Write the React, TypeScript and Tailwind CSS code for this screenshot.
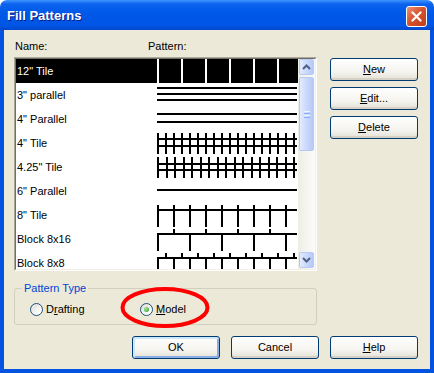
import React from 'react';

type Seg = [number, number, number, number];

const range = (start: number, step: number, max: number) => {
    const out: number[] = [];
    for (let v = start; v <= max; v += step) out.push(Math.round(v));
    return out;
};

const hLine = (y: number): Seg => [0, y, 140, y];

// line segments of each pattern, inside a 140x24 cell
const patterns: Record<string, Seg[]> = {
    tile12: range(1, 24, 139).map((x) => [x, 0, x, 24] as Seg),
    par3: [hLine(5), hLine(11), hLine(17)],
    par4: [hLine(7), hLine(15)],
    tile4: [hLine(8), hLine(15), ...range(1, 8, 139).map((x) => [x, 2, x, 23] as Seg)],
    tile425: [hLine(9), hLine(15), ...range(1, 8.5, 139).map((x) => [x, 2, x, 23] as Seg)],
    par6: [hLine(11)],
    tile8: [hLine(7), ...range(1, 16, 139).map((x) => [x, 2, x, 24] as Seg)],
    block816: [
        hLine(7),
        ...range(17, 32, 139).map((x) => [x, 2, x, 7] as Seg),
        ...range(1, 32, 139).map((x) => [x, 7, x, 24] as Seg),
    ],
    block88: [
        hLine(7),
        ...range(9, 16, 139).map((x) => [x, 2, x, 7] as Seg),
        ...range(1, 16, 139).map((x) => [x, 7, x, 24] as Seg),
    ],
};

const rows = [
    { name: '12" Tile', pattern: 'tile12' },
    { name: '3" parallel', pattern: 'par3' },
    { name: '4" Parallel', pattern: 'par4' },
    { name: '4" Tile', pattern: 'tile4' },
    { name: '4.25" Tile', pattern: 'tile425' },
    { name: '6" Parallel', pattern: 'par6' },
    { name: '8" Tile', pattern: 'tile8' },
    { name: 'Block 8x16', pattern: 'block816' },
    { name: 'Block 8x8', pattern: 'block88' },
];

function PatternCell({ kind, color }: { kind: string; color: string }) {
    return (
        <svg width="140" height="24" viewBox="0 0 140 24" shapeRendering="crispEdges" className="shrink-0">
            {patterns[kind].map(([x1, y1, x2, y2], i) => (
                <line key={i} x1={x1} y1={y1} x2={x2} y2={y2} stroke={color} strokeWidth={2} />
            ))}
        </svg>
    );
}

function Chevron({ up }: { up?: boolean }) {
    return (
        <svg width="9" height="6" viewBox="0 0 9 6">
            <polyline
                points={up ? '1,5 4.5,1.5 8,5' : '1,1 4.5,4.5 8,1'}
                fill="none"
                stroke="#4D6185"
                strokeWidth={2}
            />
        </svg>
    );
}

const scrollPart =
    'rounded-[2px] border border-[#B7CAF5] bg-[linear-gradient(to_right,#E3EBFE,#C6D5FC_60%,#B6C9F8)] flex items-center justify-center';

function XpButton({
    children,
    isDefault,
}: {
    children: React.ReactNode;
    isDefault?: boolean;
}) {
    return (
        <button
            type="button"
            className={
                'h-[23px] w-[88px] rounded-[3px] border border-[#003C74] bg-[linear-gradient(to_bottom,#FFFFFF,#F5F4EF_60%,#E3E1D7)] text-[11px] text-black ' +
                (isDefault
                    ? 'shadow-[inset_1px_1px_0_1px_#CEE7FF,inset_-1px_-1px_0_1px_#89ADE4]'
                    : 'shadow-[inset_0_-2px_0_#D6D0C5]')
            }
        >
            {children}
        </button>
    );
}

function Radio({ checked, children }: { checked?: boolean; children: React.ReactNode }) {
    return (
        <label className="flex items-center gap-[3px]">
            <span className="flex h-[13px] w-[13px] items-center justify-center rounded-full border border-[#1C5180] bg-[linear-gradient(135deg,#DCDCD5,#FFFFFF_80%)]">
                {checked && (
                    <span className="h-[5px] w-[5px] rounded-full bg-[radial-gradient(circle_at_35%_35%,#A6E29B,#21A121)]" />
                )}
            </span>
            <span>{children}</span>
        </label>
    );
}

export default function App() {
    return (
        <div className="flex h-[373px] w-[434px] flex-col overflow-hidden font-['Liberation_Sans',Arial,sans-serif] text-[11px] text-black">
            {/* タイトルバー */}
            <div className="flex h-[30px] shrink-0 items-center justify-between rounded-t-[7px] bg-[linear-gradient(to_bottom,#3D93FF_0%,#0A62EE_14%,#0058E8_45%,#0055E4_85%,#0047CC_100%)] pl-[7px] pr-[7px] pt-[2px]">
                <span className="text-[13px] font-bold text-white [text-shadow:1px_1px_0_#0A1883]">
                    Fill Patterns
                </span>
                <span className="flex h-[21px] w-[21px] items-center justify-center rounded-[3px] border border-white bg-[linear-gradient(135deg,#EA9277,#D9532F_45%,#C33A17)]">
                    <svg width="11" height="11" viewBox="0 0 11 11">
                        <path d="M1.5 1.5 L9.5 9.5 M9.5 1.5 L1.5 9.5" stroke="white" strokeWidth={2.2} strokeLinecap="round" />
                    </svg>
                </span>
            </div>

            {/* 本体 */}
            <div className="flex flex-1 flex-col border-x-4 border-b-4 border-[#0453E0] bg-[#ECE9D8] pt-[10px]">
                <div className="flex pl-[10px]">
                    <div className="flex w-[303px] flex-col">
                        <div className="flex h-[13px] leading-[13px]">
                            <span className="w-[134px] pl-[1px]">Name:</span>
                            <span>Pattern:</span>
                        </div>
                        <div className="mt-[4px] h-[214px] border-b border-l border-r border-t border-b-white border-l-[#ACA899] border-r-white border-t-[#ACA899]">
                            <div className="flex h-full border-b border-l border-r border-t border-b-[#F1EFE2] border-l-[#716F64] border-r-[#F1EFE2] border-t-[#716F64] bg-white">
                                <div className="w-[282px] overflow-hidden">
                                    {rows.map((r, i) => {
                                        const sel = i === 0;
                                        return (
                                            <div
                                                key={r.name}
                                                className={'flex h-[24px] items-center ' + (sel ? 'bg-black text-white' : '')}
                                            >
                                                <span className="w-[141px] shrink-0 pl-[1px]">{r.name}</span>
                                                <PatternCell kind={r.pattern} color={sel ? '#FFFFFF' : '#000000'} />
                                            </div>
                                        );
                                    })}
                                </div>
                                <div className="flex w-[17px] flex-col bg-[linear-gradient(to_right,#EEEDE5,#FBFBF8)] px-[1px] pb-[1px]">
                                    <div className={scrollPart + ' h-[16px]'}>
                                        <Chevron up />
                                    </div>
                                    <div className={scrollPart + ' mt-[2px] h-[74px] flex-col gap-[1px]'}>
                                        <span className="h-px w-[6px] bg-[#EEF4FE]" />
                                        <span className="h-px w-[6px] bg-[#8CB0F8]" />
                                        <span className="h-px w-[6px] bg-[#EEF4FE]" />
                                        <span className="h-px w-[6px] bg-[#8CB0F8]" />
                                    </div>
                                    <div className="flex-1" />
                                    <div className={scrollPart + ' h-[16px]'}>
                                        <Chevron />
                                    </div>
                                </div>
                            </div>
                        </div>
                    </div>

                    <div className="ml-[13px] flex flex-col gap-[6px] pt-[18px]">
                        <XpButton>
                            <u>N</u>ew
                        </XpButton>
                        <XpButton>
                            <u>E</u>dit...
                        </XpButton>
                        <XpButton>
                            <u>D</u>elete
                        </XpButton>
                    </div>
                </div>

                {/* パターンタイプ */}
                <fieldset className="relative ml-[10px] mt-[11px] w-[303px] rounded-[3px] border border-[#D0D0BF] px-[7px] pb-[8px] pt-[8px]">
                    <legend className="px-[2px] leading-[13px] text-[#0046D5]">Pattern Type</legend>
                    <div className="flex items-center pl-[8px] leading-[13px]">
                        <div className="w-[110px]">
                            <Radio>
                                D<u>r</u>afting
                            </Radio>
                        </div>
                        <Radio checked>
                            <u>M</u>odel
                        </Radio>
                    </div>
                    <svg
                        width="90"
                        height="41"
                        viewBox="0 0 90 41"
                        className="absolute left-[105px] top-[-8px]"
                    >
                        <ellipse cx="45" cy="20.5" rx="42.5" ry="18.5" fill="none" stroke="#FF0000" strokeWidth={4} />
                    </svg>
                </fieldset>

                <div className="mt-[11px] flex justify-end gap-[11px] pr-[12px]">
                    <XpButton isDefault>OK</XpButton>
                    <XpButton>Cancel</XpButton>
                    <XpButton>
                        <u>H</u>elp
                    </XpButton>
                </div>
            </div>
        </div>
    );
}
